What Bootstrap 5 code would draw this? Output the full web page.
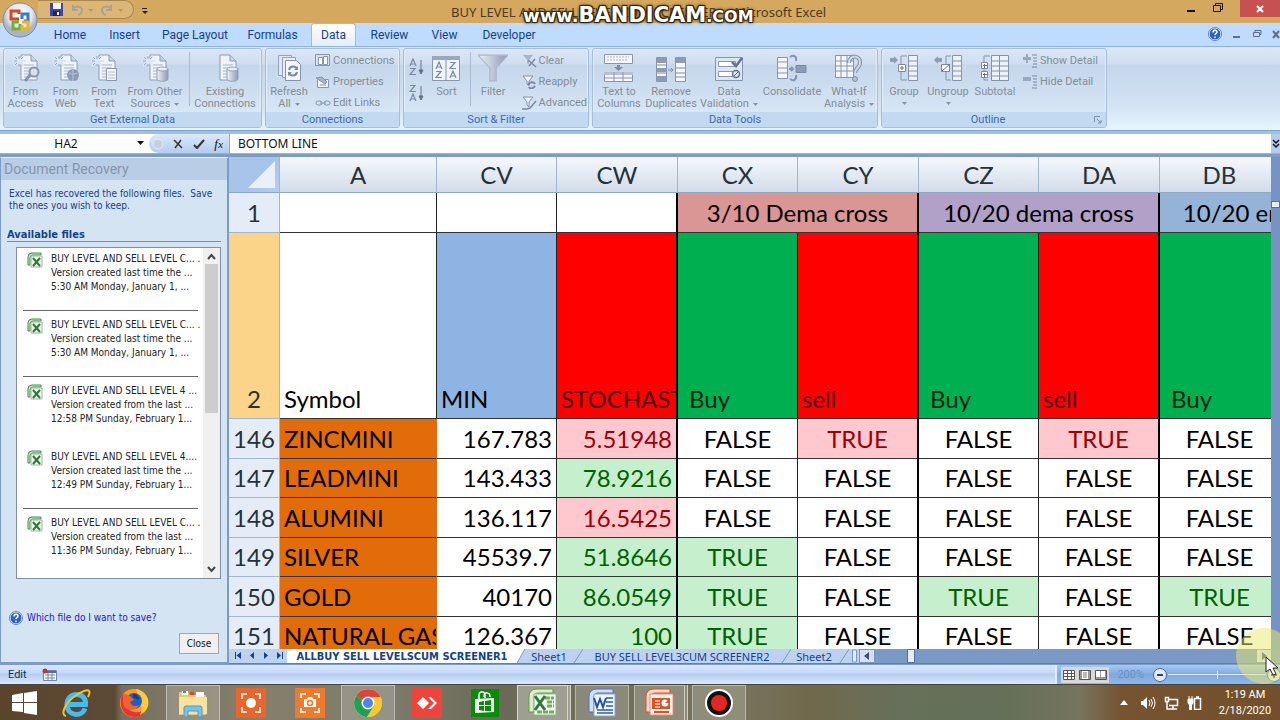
<!DOCTYPE html>
<html lang="en">
<head>
<meta charset="utf-8">
<meta name="viewport" content="width=device-width, initial-scale=1">
<title>BUY LEVEL AND SELL LEVEL CUM SCREENER - Microsoft Excel</title>
<link href="https://cdn.jsdelivr.net/npm/bootstrap@5.3.0/dist/css/bootstrap.min.css" rel="stylesheet">
<style>
:root{--ui:"Noto Sans","Open Sans",sans-serif;--rib:Roboto,"Noto Sans",sans-serif;--cal:Lato,sans-serif;--tahoma:"DejaVu Sans Condensed","DejaVu Sans",sans-serif}
body{font-family:var(--rib);font-size:11px;line-height:12px;color:#15428b;background:#bfdbff;overflow:hidden}
button{border:0;background:none;padding:0;color:inherit;font:inherit}
a{text-decoration:none}
svg{display:block;flex:none}
.titlebar{height:23px;background:#d5a85f}
.qat{width:96px;height:19px;margin-left:38px;border:1px solid #a98850;border-left:0;border-radius:0 10px 10px 0;background:#dcb676;padding-left:12px}
.wintitle{font:13px/24px var(--ui);color:#4c3c22;padding-left:303px}
.close-x{width:40px;height:17px;background:#c75050}
.orb{left:2px;top:2px;z-index:5}
.wmark{left:523px;top:3px;font-family:"DejaVu Sans",sans-serif;font-weight:bold;color:#fff;line-height:24px;text-shadow:1px 1px 1px #2b2110,-1px -1px 1px #2b2110,1px -1px 1px #2b2110,-1px 1px 1px #2b2110,0 0 4px #3b2c12;z-index:6}
.wmark .w1{font-size:18px}.wmark .w2{font-size:21px}.wmark .w3{font-size:16px}
.tabrow{height:23px;padding-left:43px;background:#bfdbff}
.tabrow .rtab{font-size:12px;line-height:24px;height:23px;text-align:center;color:#15428b}
.tabrow .rtab.on{background:linear-gradient(#fff,#e4eef9);border:1px solid #9dbbe0;border-bottom:0;border-radius:3px 3px 0 0;line-height:22px}
.ribbon{height:85px;padding:1px 3px 3px;gap:3px;border-top:1px solid #8db2e3;background:linear-gradient(#dce7f5 0,#cfdeef 17px,#c5d6eb 18px,#d4e4f4 60px,#e4f6ff 100%);border-bottom:1px solid #7fa4cc}
.rgroup{border:1px solid #a5bedb;border-radius:3px;box-shadow:inset 0 0 0 1px #e3edf8;height:80px}
.rgroup .gbody{flex:1;padding:1px 1px 0;color:#858d96;min-height:0}
.rgroup .gcap{height:15px;line-height:15px;text-align:center;background:#c1d9f1;color:#3e6aaa;border-radius:0 0 3px 3px}
.big{display:flex;flex-direction:column;align-items:center;text-align:center;white-space:nowrap;padding-top:3px!important}
.big svg{margin-bottom:3px}
.vsep{width:1px;height:54px;background:#a9bcd4;margin:2px 2px 0}
.small-b{display:flex;align-items:center;gap:2px;height:21px;white-space:nowrap}
.fbar{height:23px;border-top:3px solid #a4bfdd;border-bottom:1px solid #9ab3d2;background:#fff;color:#111}
.fbar input{border:0;outline:0;font:12px/19px var(--ui);color:#111;background:#fff;padding:0;min-width:0}
.fbar .namebox{width:132px;text-align:center}
.fxbox{width:81px;background:linear-gradient(#dbe9fa,#b3cdee);border-radius:10px 0 0 10px;border-right:1px solid #8eabd0;padding:0 6px 0 3px}
.work{flex:1;min-height:0;background:#d5e4f2;border-top:3px solid #7c9cc6}
.pane{width:229px;font-family:var(--tahoma);font-size:10px;border:1px solid #7c9cc6;border-right-width:2px;border-bottom-width:2px;background:#d5e4f2;border-top:1px solid #eef5fc}
.pane h2{font:14px/22px var(--rib);color:#8796ad;background:#b9cde6;margin:0;padding-left:3px}
.avail{font-weight:bold;font-size:11px;line-height:13px;border-bottom:1px solid #6d8fc0;margin:0 6px 5px}
.files{height:332px;margin:0 6px 0 15px;border:1px solid #7f90a6;background:#fff;color:#222}
.files ul{width:187px;overflow:hidden}
.files li{height:66px;padding:4px 0 0 10px;position:relative;line-height:14px;white-space:nowrap;gap:8px}
.files li.ruled::after{content:"";position:absolute;left:6px;right:5px;bottom:3px;height:1px;background:#666}
.fscroll{width:17px;background:#f0f0f0}
.fscroll .thumb{height:149px;background:#cdcdcd;width:13px}
.close-b{width:40px;height:21px;border:1px solid #a5a5a5;background:#f0f0f0;color:#111}
.gridwrap{flex:1;min-height:0;overflow:hidden;background:#fff}
.sheet{table-layout:fixed;width:1171px;border-collapse:separate;border-spacing:0;font:24px/30px var(--cal);color:#000}
.sheet th,.sheet td{border-right:1px solid #222;border-bottom:1px solid #333;padding:0 4px;overflow:hidden;white-space:nowrap;font-weight:400;vertical-align:middle}
.sheet thead th{height:36px;text-align:center;color:#263238;background:linear-gradient(#f6f9fd,#dfe7f1 60%,#d2dcea);border-right-color:#9eb6ce;border-bottom-color:#8ea9c8}
.sheet tbody th{background:#e4ecf7;color:#263238;text-align:center;padding:0;border-right-color:#9eb6ce;border-bottom-color:#9eb6ce}
.sheet .corner{background:linear-gradient(135deg,#a9c4e9 60%,#b7cdec)}
.sheet tbody tr:nth-child(odd)>*{height:40px}
.sheet tbody tr:nth-child(even)>*{height:39px}
.sheet tbody tr.r1>*{height:40px;text-align:center}
.sheet tbody tr.r2>*{height:186px;vertical-align:bottom;padding-bottom:4px}
.sheet tr.r2 th{background:#fbd389}
.sheet .thick{border-right:2px solid #000}
.sheet .sym{background:#e26b0a;border-right-color:#e26b0a}
.sheet .num{text-align:right}
.sheet .lg{text-align:center}
.sheet .dn{background:#ffc7ce;color:#9c0006}
.sheet .up{background:#c6efce;color:#006100}
.sheet .buy{background:#00b050;padding-left:11px;color:#021}
.sheet .sell{background:#f00;color:#400}
.vscroll{width:9px;background:#7594c4;padding-top:44px}
.vscroll i{display:block;height:7px;background:#e8effa;border:1px solid #516f9f}
.tabsbar{height:15px;background:#7a99c6;font-family:var(--ui);font-size:11px;line-height:15px;border-bottom:1px solid #5d80b4}
.tabsbar .strip{background:#bcd2f0;height:14px}
.tabsbar .stab{display:block;height:14px;white-space:nowrap;color:#15428b;text-align:center}
.stab.cur{background:#fff;font-family:var(--tahoma);font-weight:bold}
.status{height:20px;background:linear-gradient(#d9e7fb 0,#c3d8f8 8px,#b4cdf3 9px,#dbe8fc 100%);color:#1c2c4c;border-top:1px solid #7a9cc9}
.status .rt{background:linear-gradient(#a9c9f2,#7ea8e0 50%,#8fb7ea);border-left:2px solid #e3eefc;width:225px}
.views{background:#d8d8d8;width:53px;height:16px}
.zoomr{appearance:none;-webkit-appearance:none;height:8px;width:98px;margin:0;background:linear-gradient(#dceafc,#dceafc) center/100% 1px no-repeat,linear-gradient(#dceafc,#dceafc) center/1px 8px no-repeat}
.zoomr::-webkit-slider-thumb{-webkit-appearance:none;width:1px;height:8px;background:#dceafc}
.taskbar{height:36px;border-top:1px solid #47443c;background:linear-gradient(90deg,#5b442c 0,#5d4a35 115px,#77705f 122px,#84806c 260px,#7b7969 400px,#6b6a58 500px,#77745d 740px,#71694c 810px,#66705a 900px,#647059 1000px,#76745f 1080px,#775431 1120px,#73502b 100%)}
.apps{width:697px}
.apps button{width:54px;height:35px}
.apps .run{background:#ffffff30;border:1px solid #ffffff60;border-bottom:0}
.apps .act{background:#ffffff58;border:1px solid #ffffffa0;border-bottom:0}
.apps .many{border-right:4px double #ffffff90}
.clock{color:#fff;font-size:12px;line-height:16px;text-align:center;width:70px}
.pointer{right:-12px;bottom:36px;width:56px;height:56px;border-radius:50%;background:#e9e96a80;z-index:9;pointer-events:none}
.pointer svg{position:absolute;left:29px;top:28px}
</style>
</head>
<body class="vh-100 d-flex flex-column position-relative">
<svg width="0" height="0" class="position-absolute" aria-hidden="true">
<defs>
<linearGradient id="gb" x1="0" y1="0" x2="1" y2="0"><stop offset="0" stop-color="#eef2f8"/><stop offset="1" stop-color="#8c9ab3"/></linearGradient>
<radialGradient id="go" cx=".5" cy=".35"><stop offset="0" stop-color="#fff"/><stop offset=".7" stop-color="#e3e7ee"/><stop offset="1" stop-color="#aab4c4"/></radialGradient>
<symbol id="doc" viewBox="0 0 28 28"><path d="M9 1h10l6 6v19H9z" fill="#eff4fa" stroke="#8c9db8"/><path d="M19 1v6h6" fill="#c9d5e6" stroke="#8c9db8"/><path d="M12 11h10M12 14h10M12 17h10M12 20h7M12 23h7" stroke="#a7b4cb"/></symbol>
<symbol id="star" viewBox="0 0 28 28"><path d="M7 1v13M1 7h13M2 2l10 10M12 2L2 12" stroke="#dbe7f6" stroke-width="2"/><path d="M7 2v3M7 10v3M2 7h3M3 3l2 2M11 3l-2 2M3 11l2-2" stroke="#97a5bd"/></symbol>
<symbol id="cyl" viewBox="0 0 28 28"><path d="M16 15v10c0 3 11 3 11 0V15z" fill="url(#gb)" stroke="#93a1b8"/><ellipse cx="21.500" cy="15" rx="5.500" ry="2" fill="#e6ecf5" stroke="#93a1b8"/></symbol>
<symbol id="xl" viewBox="0 0 16 16"><path d="M1 5q0-4 4-4h9v2H6Q3 3 3 6v7H1z" fill="#cfe6cf" stroke="#3e8f4a"/><path d="M4 4h11v11H4z" fill="#eff7ef" stroke="#9db89f"/><path d="M6 6l7 8M13 6l-7 8" stroke="#2c7a36" stroke-width="2"/></symbol>
<symbol id="help" viewBox="0 0 14 14"><circle cx="7" cy="7" r="6" fill="#2d63c4" stroke="#fff"/><circle cx="7" cy="7" r="6.500" fill="none" stroke="#5b83be"/><path d="M5 5.500c0-3 4-3 4-.5 0 1.500-2 1.500-2 3M7 9.500v1.500" stroke="#fff" stroke-width="1.500" fill="none"/></symbol>
<symbol id="az" viewBox="0 0 16 18"><path d="M1 8l3-7 3 7M2 6h4M1 10.500h5l-5 6h6" fill="none" stroke="#7c89a3" stroke-width="1.200"/><path d="M12 2v13M10 12l2 4 2-4z" stroke="#64718c" fill="#64718c"/></symbol>
<symbol id="za" viewBox="0 0 16 18"><path d="M1 1.500h5l-5 6h6M1 17l3-7 3 7M2 15h4" fill="none" stroke="#7c89a3" stroke-width="1.200"/><path d="M12 2v13M10 12l2 4 2-4z" stroke="#64718c" fill="#64718c"/></symbol>
<symbol id="fun" viewBox="0 0 28 28"><path d="M0 2h28L17 14v12h-6V14z" fill="url(#gb)" stroke="#a9b5c9"/></symbol>
<symbol id="rows" viewBox="0 0 10 26"><path d="M.5.500h9v25h-9z" fill="#eef3fa" stroke="#8393ae"/><path d="M0 6h10M0 11h10M0 16h10M0 21h10" stroke="#8393ae"/></symbol>
<symbol id="dn" viewBox="0 0 5 3"><path d="M0 0h5L2.500 3z" fill="#8b939b"/></symbol>
</defs></svg>

<header class="titlebar d-flex align-items-start">
 <div class="qat d-flex align-items-center gap-2">
  <button aria-label="Save"><svg width="13" height="13"><path d="M0 0h13v13H0z" fill="#3a46a8"/><path d="M3 0h8v6H3z" fill="#f2f5ff"/><path d="M3 8h7v5H3z" fill="#22285f"/><path d="M7 9h2v3H7z" fill="#fff"/></svg></button>
  <button aria-label="Undo"><svg width="22" height="12"><path d="M2 1v5h5M2 6c2-5 9-4 9 0 0 2-1 4-4 5" fill="none" stroke="#a9a298" stroke-width="2"/><path d="M17 5h5l-2 3z" fill="#b4985f"/></svg></button>
  <button aria-label="Redo"><svg width="22" height="12"><path d="M10 1v5H5M10 6C8 1 1 2 1 6c0 2 1 4 4 5" fill="none" stroke="#a9a298" stroke-width="2"/><path d="M17 5h5l-2 3z" fill="#b4985f"/></svg></button>
 </div>
 <button aria-label="Customize toolbar" class="ms-2 mt-2"><svg width="6" height="6"><path d="M0 .5h5" stroke="#222"/><path d="M0 3h6L3 6z" fill="#222"/></svg></button>
 <div class="wintitle text-nowrap">BUY LEVEL AND SELL LEVEL CUM SCREENER&nbsp; - &nbsp;Microsoft Excel</div>
 <div class="ms-auto d-flex gap-3">
  <button aria-label="Minimize"><svg width="10" height="17"><path d="M1 11h8" stroke="#111" stroke-width="2"/></svg></button>
  <button aria-label="Restore"><svg width="12" height="17"><path d="M1.500 5.500h7v6h-7zM3.500 5V3.500h7v6H9" fill="none" stroke="#111"/></svg></button>
  <button aria-label="Close window" class="close-x d-flex align-items-center justify-content-center"><svg width="8" height="8"><path d="M1 1l6 6M7 1L1 7" stroke="#fff" stroke-width="2"/></svg></button>
 </div>
</header>
<button class="orb position-absolute" aria-label="Office Button"><svg width="36" height="36"><circle cx="18" cy="18" r="17" fill="url(#go)" stroke="#7e8ba2"/><g fill="none" stroke-width="3"><path d="M17 17H9V9h8v3" stroke="#d8481c"/><path d="M20 17v-5h6v7h-4" stroke="#2f7fc6"/><path d="M17 20h-6v7h7v-5" stroke="#78ab2e"/><path d="M20 20h6v7h-6v-4" stroke="#f0b323"/></g></svg></button>
<div class="wmark position-absolute text-nowrap"><span class="w1">www.</span><span class="w2">BANDICAM</span><span class="w3">.COM</span></div>

<nav class="tabrow d-flex align-items-start">
 <button class="rtab" style="width:54px">Home</button><button class="rtab" style="width:55px">Insert</button><button class="rtab" style="width:86px">Page Layout</button><button class="rtab" style="width:69px">Formulas</button>
 <button class="rtab on ms-1" style="width:45px">Data</button><button class="rtab" style="width:67px">Review</button><button class="rtab" style="width:43px">View</button><button class="rtab" style="width:86px">Developer</button>
 <div class="ms-auto d-flex align-items-center gap-2 pt-1">
  <button aria-label="Help"><svg width="14" height="14"><use href="#help"/></svg></button>
  <button aria-label="Minimize workbook"><svg width="12" height="12"><path d="M3 9h7" stroke="#5d6e8a" stroke-width="2"/></svg></button>
  <button aria-label="Restore workbook"><svg width="14" height="12"><path d="M3.500 4.500h6v4h-6zM5 4V2.500h6v4H10" fill="none" stroke="#5d6e8a"/></svg></button>
  <button aria-label="Close workbook"><svg width="8" height="10"><path d="M1 2l6 7M7 2L1 9" stroke="#5d6e8a" stroke-width="2"/></svg></button>
 </div>
</nav>

<section class="ribbon d-flex">
 <div class="rgroup d-flex flex-column" style="width:259px">
  <div class="gbody d-flex">
   <button class="big" style="width:41px"><svg width="28" height="30" viewBox="0 0 28 28"><use href="#doc"/><use href="#star"/><circle cx="22" cy="18" r="4.500" fill="#d9e1ed" stroke="#8795ae" stroke-width="2"/><path d="M18 21l-5 6" stroke="#8795ae" stroke-width="3"/></svg>From<br>Access</button>
   <button class="big" style="width:39px"><svg width="28" height="30" viewBox="0 0 28 28"><use href="#doc"/><use href="#star"/><circle cx="21" cy="21" r="6" fill="#8e9bb5"/><path d="M17 19q4 3 8 0M21 15v12" stroke="#b9c4d8" fill="none"/></svg>From<br>Web</button>
   <button class="big" style="width:38px"><svg width="28" height="30" viewBox="0 0 28 28"><use href="#doc"/><use href="#star"/><path d="M16.500 14.500h10v12h-10z" fill="#f6f8fc" stroke="#8795ae"/><path d="M18 18h7M18 21h7M18 24h7" stroke="#b0bbcf"/></svg>From<br>Text</button>
   <button class="big" style="width:64px"><svg width="28" height="30" viewBox="0 0 28 28"><use href="#doc"/><use href="#star"/><use href="#cyl"/></svg>From Other<br><span class="d-flex align-items-center gap-1">Sources <svg class="m-0" width="5" height="3"><use href="#dn"/></svg></span></button>
   <span class="vsep"></span>
   <button class="big" style="width:66px"><svg width="28" height="30" viewBox="0 0 28 28"><use href="#doc"/><use href="#cyl"/></svg>Existing<br>Connections</button>
  </div>
  <div class="gcap">Get External Data</div>
 </div>
 <div class="rgroup d-flex flex-column" style="width:135px">
  <div class="gbody d-flex">
   <button class="big" style="width:44px"><svg width="26" height="30" viewBox="0 0 26 28"><path d="M2.500 1.500h13v20h-13z" fill="#dfe7f2" stroke="#93a3bd"/><path d="M6.500 3.500h13v20h-13z" fill="#e7eef7" stroke="#93a3bd"/><path d="M9.500 6.500h11l4 4v16h-15z" fill="#f3f7fc" stroke="#8393ae"/><path d="M13 16c1-5 7-4 8-1M21 18c-1 5-7 4-8 1" fill="none" stroke="#7c8aa5" stroke-width="2"/><path d="M22 12v4h-4zM12 22v-4h4z" fill="#7c8aa5"/></svg>Refresh<br><span class="d-flex align-items-center gap-1">All <svg class="m-0" width="5" height="3"><use href="#dn"/></svg></span></button>
   <div class="ps-1">
    <button class="small-b"><svg width="16" height="14"><path d="M.5.500h14v11h-14z" fill="#d7e1ee" stroke="#8795ae"/><path d="M3.500 3.500h4v7h-4zM8.500 2.500h4v8h-4z" fill="#fff" stroke="#8795ae"/></svg>Connections</button>
    <button class="small-b"><svg width="16" height="14"><path d="M2.500 4.500h11v8h-11z" fill="#f3f6fb" stroke="#8795ae"/><path d="M1 3l6-1 5 5-2 2z" fill="#a8b4c8" stroke="#8795ae"/><path d="M5 10h6" stroke="#8795ae"/></svg>Properties</button>
    <button class="small-b"><svg width="16" height="14"><g fill="none" stroke="#8795ae"><rect x="1" y="5" width="6" height="4" rx="2"/><rect x="9" y="5" width="6" height="4" rx="2"/><path d="M5 7h6"/></g></svg>Edit Links</button>
   </div>
  </div>
  <div class="gcap">Connections</div>
 </div>
 <div class="rgroup d-flex flex-column" style="width:186px">
  <div class="gbody d-flex">
   <div class="d-flex flex-column gap-2 pt-2 ps-1"><button aria-label="Sort A to Z"><svg width="16" height="18"><use href="#az"/></svg></button><button aria-label="Sort Z to A"><svg width="16" height="18"><use href="#za"/></svg></button></div>
   <button class="big" style="width:44px"><svg width="28" height="30"><path d="M.5 3.500h27v24H.5z" fill="#eff3fa" stroke="#8795ae"/><path d="M0 3h28v4H0z" fill="#9aa8bf"/><path d="M14 7v20" stroke="#8795ae"/><path d="M4 16l3-7 3 7M5 14h4M4 18.500h5l-5 6h6M18 9.500h5l-5 6h6M18 25l3-7 3 7M19 23h4" fill="none" stroke="#7c89a3" stroke-width="1.200"/></svg>Sort</button>
   <span class="vsep"></span>
   <button class="big" style="width:42px"><svg width="30" height="30"><use href="#fun"/></svg>Filter</button>
   <div class="ps-2">
    <button class="small-b"><svg width="15" height="14"><path d="M1 1h10L7 6v5L5 9V6z" fill="#a8b4c8"/><path d="M6 6l8 7M13 5l-6 7" stroke="#7c89a3" stroke-width="1.500"/></svg>Clear</button>
    <button class="small-b"><svg width="15" height="14"><path d="M1 1h10L7 6v5L5 9V6z" fill="#f0f4fa" stroke="#8795ae"/><path d="M6 10c2-4 6-3 7-1M13 11c-2 3-5 3-6 1" fill="none" stroke="#7c89a3" stroke-width="2"/></svg>Reapply</button>
    <button class="small-b"><svg width="15" height="14"><path d="M1 1h10L7 6v5L5 9V6z" fill="#f0f4fa" stroke="#8795ae"/><path d="M14 5l-6 7-3 1M0 13h6" stroke="#7c89a3" stroke-width="1.500" fill="none"/></svg>Advanced</button>
   </div>
  </div>
  <div class="gcap">Sort &amp; Filter</div>
 </div>
 <div class="rgroup d-flex flex-column" style="width:286px">
  <div class="gbody d-flex">
   <button class="big" style="width:50px"><svg width="30" height="30"><path d="M.5 1.500h28v9H.5zM.5 19.500h28v9H.5z" fill="#f6f8fc" stroke="#8795ae"/><path d="M3 4h22M3 7h20" stroke="#a7b4cb" stroke-dasharray="2 1"/><path d="M0 19h29v3H0z" fill="#b6c2d4"/><path d="M10 19v9M19 19v9M0 25h29" stroke="#8795ae"/><path d="M13 12h3v2h3l-4.500 4L10 14h3z" fill="#7c89a3"/></svg>Text to<br>Columns</button>
   <button class="big" style="width:54px"><svg width="30" height="30"><path d="M.5 4.500h10v24H.5zM19.500 4.500h10v24h-10z" fill="#f6f8fc" stroke="#8795ae"/><path d="M1 5h9v5H1zM1 15h9v4H1zM1 23h9v5H1zM20 5h9v5h-9z" fill="#8e9bb5"/><path d="M1 12h9M1 20h9M20 15h9M20 20h9M20 24h9M12 17h5m-2-2l2 2-2 2" stroke="#7c89a3" fill="none"/></svg>Remove<br>Duplicates</button>
   <button class="big" style="width:62px"><svg width="30" height="30"><path d="M1.500 4.500h27v23h-27z" fill="#dde6f1" stroke="#8795ae"/><path d="M4.500 8.500h17v5h-17zM4.500 18.500h17v5h-17z" fill="#fff" stroke="#8795ae"/><path d="M18 9l4 4 6-8" stroke="#66738f" stroke-width="2.500" fill="none"/><circle cx="22" cy="21" r="3.500" fill="#dde6f1" stroke="#66738f" stroke-width="1.500"/><path d="M20 23l4-4" stroke="#66738f"/></svg>Data<br><span class="d-flex align-items-center gap-1">Validation <svg class="m-0" width="5" height="3"><use href="#dn"/></svg></span></button>
   <button class="big" style="width:64px"><svg width="30" height="30"><path d="M.5 4.500h10v21H.5z" fill="#f3f6fb" stroke="#8795ae"/><path d="M0 9h10M0 15h10M0 20h10" stroke="#8795ae"/><path d="M19 12.500h10v7H19z" fill="#8e9bb5" stroke="#7c89a3"/><path d="M12 16h4m-2-2l2 2-2 2M13 4c4-3 7 0 6 4M13 26c4 3 7 0 6-4" stroke="#8795ae" stroke-width="2" fill="none"/></svg>Consolidate</button>
   <button class="big" style="width:50px"><svg width="30" height="30"><path d="M1.500 2.500h18v22h-18z" fill="#f3f6fb" stroke="#8795ae"/><path d="M1 8h18M1 13h18M1 18h18M7 2v22M13 2v22" stroke="#8795ae"/><path d="M15 10c0-9 12-8 11 0 0 5-5 5-5 10" stroke="#8290aa" stroke-width="4" fill="none"/><path d="M15 10c0-9 12-8 11 0 0 5-5 5-5 10" stroke="#cfd9e7" stroke-width="2" fill="none"/><circle cx="21" cy="26" r="2.500" fill="#b4c0d3" stroke="#8290aa"/></svg>What-If<br><span class="d-flex align-items-center gap-1">Analysis <svg class="m-0" width="5" height="3"><use href="#dn"/></svg></span></button>
  </div>
  <div class="gcap">Data Tools</div>
 </div>
 <div class="rgroup d-flex flex-column" style="width:226px">
  <div class="gbody d-flex">
   <button class="big" style="width:42px"><svg width="30" height="30"><use href="#rows" x="19" y="2" width="10" height="26"/><path d="M18 3h-6v24h6" fill="none" stroke="#8795ae"/><path d="M9.500 11.500h7v7h-7z" fill="#fff" stroke="#7c89a3"/><path d="M11 15h4M13 13v4" stroke="#66738f"/><path d="M1 5h4V3l4 4-4 4V9H1z" fill="#8e9bb5"/></svg>Group<svg class="mt-1 mb-0" width="5" height="3"><use href="#dn"/></svg></button>
   <button class="big" style="width:46px"><svg width="30" height="30"><use href="#rows" x="19" y="2" width="10" height="26"/><path d="M18 3h-5v24h5" fill="none" stroke="#8795ae"/><path d="M8.500 11.500h8v7h-8z" fill="#fff" stroke="#7c89a3"/><path d="M9 18l8-7" stroke="#66738f"/><path d="M9 5H5V3L1 7l4 4V9h4z" fill="#8e9bb5"/></svg>Ungroup<svg class="mt-1 mb-0" width="5" height="3"><use href="#dn"/></svg></button>
   <button class="big" style="width:48px"><svg width="30" height="30"><use href="#rows" x="11" y="2" width="10" height="26"/><use href="#rows" x="19" y="2" width="10" height="26"/><path d="M10 3H4v24h4" fill="none" stroke="#8795ae"/><path d="M1.500 9.500h6v6h-6zM1.500 18.500h6v6h-6z" fill="#fff" stroke="#7c89a3"/><path d="M3 12.500h4M4.500 11v4M3 21.500h4M4.500 20v4" stroke="#66738f"/></svg>Subtotal</button>
   <div class="ps-1">
    <button class="small-b"><svg width="15" height="14"><path d="M0 3h3V0h2v3h3v3H5v3H3V6H0z" fill="#9aa8bf"/><path d="M9 1h5M10 4h4M10 7h4M10 10h4M9 13h5" stroke="#7c89a3"/></svg>Show Detail</button>
    <button class="small-b"><svg width="15" height="14"><path d="M0 2h8v4H0z" fill="#9aa8bf"/><path d="M9 1h5M10 4h4M10 7h4M10 10h4M9 13h5" stroke="#7c89a3"/></svg>Hide Detail</button>
   </div>
  </div>
  <div class="gcap d-flex align-items-center justify-content-center"><span class="ms-auto">Outline</span><button class="ms-auto me-1" aria-label="Outline settings"><svg width="8" height="8"><path d="M.5 6V.500H6M3 3l4 4M7 4v3H4" fill="none" stroke="#7d93b3"/></svg></button></div>
 </div>
</section>

<div class="fbar d-flex">
 <input class="namebox" aria-label="Name Box" value="HA2">
 <button aria-label="Names" class="px-1"><svg width="9" height="5"><path d="M1 0h7L4.500 4z" fill="#111"/></svg></button>
 <div class="fxbox d-flex align-items-center justify-content-between">
  <svg width="12" height="12"><circle cx="6" cy="6" r="5" fill="#c5d0df" stroke="#e8eef7"/></svg>
  <button aria-label="Cancel"><svg width="10" height="10"><path d="M1 1l8 8M8 1L2 9" stroke="#333" stroke-width="1.500"/></svg></button>
  <button aria-label="Enter"><svg width="12" height="10"><path d="M1 6l3 3 7-8" fill="none" stroke="#333" stroke-width="2"/></svg></button>
  <button aria-label="Insert Function" class="fst-italic" style="font-family:'Liberation Serif',serif;font-size:13px">f<small>x</small></button>
 </div>
 <input class="flex-grow-1 ps-1 ms-1" aria-label="Formula Bar" value="BOTTOM LINE">
 <button aria-label="Expand" style="width:9px;background:#b3cdee"><svg width="9" height="10"><path d="M2 1l3 3 3-3M2 5l3 3 3-3" fill="none" stroke="#111" stroke-width="1.500"/></svg></button>
</div>

<main class="work d-flex">
 <aside class="pane d-flex flex-column flex-shrink-0">
  <h2>Document Recovery</h2>
  <p class="text-nowrap px-1 ms-1 pt-2 mb-0">Excel has recovered the following files.&nbsp; Save<br>the ones you wish to keep.</p>
  <div class="avail mt-3">Available files</div>
  <div class="files d-flex">
   <ul class="list-unstyled mb-0">
    <li class="d-flex ruled"><svg width="16" height="16"><use href="#xl"/></svg><span>BUY LEVEL AND SELL LEVEL C... .<br>Version created last time the ...<br>5:30 AM Monday, January 1, ...</span></li>
    <li class="d-flex ruled"><svg width="16" height="16"><use href="#xl"/></svg><span>BUY LEVEL AND SELL LEVEL C... .<br>Version created last time the ...<br>5:30 AM Monday, January 1, ...</span></li>
    <li class="d-flex"><svg width="16" height="16"><use href="#xl"/></svg><span>BUY LEVEL AND SELL LEVEL 4 ...<br>Version created from the last ...<br>12:58 PM Sunday, February 1...</span></li>
    <li class="d-flex ruled"><svg width="16" height="16"><use href="#xl"/></svg><span>BUY LEVEL AND SELL LEVEL 4....<br>Version created last time the ...<br>12:49 PM Sunday, February 1...</span></li>
    <li class="d-flex"><svg width="16" height="16"><use href="#xl"/></svg><span>BUY LEVEL AND SELL LEVEL C... .<br>Version created from the last ...<br>11:36 PM Sunday, February 1...</span></li>
   </ul>
   <div class="fscroll d-flex flex-column align-items-center">
    <svg width="9" height="16"><path d="M1 11l3.500-4L8 11" fill="none" stroke="#444" stroke-width="2"/></svg>
    <div class="thumb"></div>
    <svg class="mt-auto" width="9" height="16"><path d="M1 5l3.500 4L8 5" fill="none" stroke="#444" stroke-width="2"/></svg>
   </div>
  </div>
  <a href="#" class="d-flex align-items-center gap-1 ms-2 mt-auto text-nowrap" style="color:#1a1ac8"><svg width="14" height="14"><use href="#help"/></svg>Which file do I want to save?</a>
  <button class="close-b ms-auto me-2 mt-2 mb-2">Close</button>
 </aside>
 <section class="flex-grow-1 d-flex flex-column" style="min-width:0">
  <div class="d-flex flex-grow-1" style="min-height:0">
   <div class="gridwrap">
    <table class="sheet">
     <colgroup><col style="width:51px"><col style="width:157px"><col style="width:120px"><col style="width:121px"><col style="width:120px"><col style="width:121px"><col style="width:120px"><col style="width:121px"><col style="width:120px"><col style="width:120px"></colgroup>
     <thead><tr><th class="corner p-0" aria-label="Select all"><svg class="ms-auto me-1" width="27" height="27"><path d="M27 0v27H0z" fill="#e9f0fa"/></svg></th><th>A</th><th>CV</th><th>CW</th><th>CX</th><th>CY</th><th>CZ</th><th>DA</th><th>DB</th></tr></thead>
     <tbody>
      <tr class="r1"><th>1</th><td></td><td></td><td class="thick"></td><td colspan="2" class="thick" style="background:#da9694">3/10 Dema cross</td><td colspan="2" class="thick" style="background:#b1a0c7">10/20 dema cross</td><td colspan="2" style="background:#95b3d7;padding-right:20px">10/20 ema cross</td></tr>
      <tr class="r2"><th>2</th><td>Symbol</td><td style="background:#8db4e2">MIN</td><td class="sell thick">STOCHAST</td><td class="buy">Buy</td><td class="sell thick">sell</td><td class="buy">Buy</td><td class="sell thick">sell</td><td class="buy">Buy</td></tr>
      <tr><th>146</th><td class="sym">ZINCMINI</td><td class="num">167.783</td><td class="num dn thick">5.51948</td><td class="lg">FALSE</td><td class="lg dn thick">TRUE</td><td class="lg">FALSE</td><td class="lg dn thick">TRUE</td><td class="lg">FALSE</td></tr>
      <tr><th>147</th><td class="sym">LEADMINI</td><td class="num">143.433</td><td class="num up thick">78.9216</td><td class="lg">FALSE</td><td class="lg thick">FALSE</td><td class="lg">FALSE</td><td class="lg thick">FALSE</td><td class="lg">FALSE</td></tr>
      <tr><th>148</th><td class="sym">ALUMINI</td><td class="num">136.117</td><td class="num dn thick">16.5425</td><td class="lg">FALSE</td><td class="lg thick">FALSE</td><td class="lg">FALSE</td><td class="lg thick">FALSE</td><td class="lg">FALSE</td></tr>
      <tr><th>149</th><td class="sym">SILVER</td><td class="num">45539.7</td><td class="num up thick">51.8646</td><td class="lg up">TRUE</td><td class="lg thick">FALSE</td><td class="lg">FALSE</td><td class="lg thick">FALSE</td><td class="lg">FALSE</td></tr>
      <tr><th>150</th><td class="sym">GOLD</td><td class="num">40170</td><td class="num up thick">86.0549</td><td class="lg up">TRUE</td><td class="lg thick">FALSE</td><td class="lg up">TRUE</td><td class="lg thick">FALSE</td><td class="lg up">TRUE</td></tr>
      <tr><th>151</th><td class="sym">NATURAL GAS</td><td class="num">126.367</td><td class="num up thick">100</td><td class="lg up">TRUE</td><td class="lg thick">FALSE</td><td class="lg">FALSE</td><td class="lg thick">FALSE</td><td class="lg">FALSE</td></tr>
     </tbody>
    </table>
   </div>
   <div class="vscroll flex-shrink-0"><i></i></div>
  </div>
  <div class="tabsbar d-flex flex-shrink-0">
   <div class="strip d-flex flex-shrink-0">
    <svg width="58" height="14"><g fill="#15428b"><path d="M6 3h1v7H6zM12 3v7L7.500 6.500zM25 3v7l-4-3.500zM35 3v7l4-3.500zM48 3v7l4-3.500zM53 3h1v7h-1z"/></g></svg>
    <a href="#" class="stab cur" style="width:230px">ALLBUY SELL LEVELSCUM SCREENER1</a>
    <svg width="8" height="14"><path d="M0 0h8L0 14z" fill="#fff"/><path d="M8 0L0 14" stroke="#7a99c6"/></svg>
    <a href="#" class="stab" style="width:48px">Sheet1</a>
    <svg width="10" height="14"><path d="M10 0L1 14" stroke="#7a99c6"/></svg>
    <a href="#" class="stab" style="width:198px">BUY SELL LEVEL3CUM SCREENER2</a>
    <svg width="10" height="14"><path d="M10 0L1 14" stroke="#7a99c6"/></svg>
    <a href="#" class="stab" style="width:46px">Sheet2</a>
    <svg width="22" height="14"><path d="M12 0L3 14" stroke="#7a99c6"/><path d="M15.500 1v12h4V1z" fill="#e8effa" stroke="#7a99c6"/></svg>
   </div>
   <button aria-label="Scroll left"><svg width="16" height="14"><path d="M.5.500h15v13H.5z" fill="#d4e1f3" stroke="#7e94b5"/><path d="M10 3v8L5 7z" fill="#33507f"/></svg></button>
   <svg width="40" height="14"><path d="M32.500.500h7v13h-7z" fill="#e6edf7" stroke="#516f9f"/></svg>
   <button class="ms-auto me-2" aria-label="Scroll right"><svg width="16" height="14"><path d="M.5.500h15v13H.5z" fill="#d4e1f3" stroke="#7e94b5"/><path d="M6 3v8l5-4z" fill="#33507f"/></svg></button>
  </div>
 </section>
</main>

<footer class="status d-flex align-items-center flex-shrink-0">
 <span class="ps-2" style="width:34px">Edit</span>
 <button class="ms-2" aria-label="Record macro"><svg width="16" height="14"><path d="M1.500 2.500h13v10h-13z" fill="#fff" stroke="#6d86b5"/><path d="M2 3h12v2H2z" fill="#4d6fb0"/><path d="M3 7h10M3 10h10M6 5v7M10 5v7" stroke="#6d86b5"/><circle cx="3" cy="3" r="2.500" fill="#b5382c"/></svg></button>
 <div class="rt ms-auto h-100 d-flex align-items-center ps-1">
  <div class="views d-flex align-items-center justify-content-around">
   <button aria-label="Normal"><svg width="12" height="10"><path d="M.5.500h11v9H.5zM0 3.500h12M0 6.500h12M4.500 0v10M8.500 0v10" fill="#fff" stroke="#555"/></svg></button>
   <button aria-label="Page Layout view"><svg width="12" height="10"><path d="M.5.500h11v9H.5z" fill="#999" stroke="#555"/><path d="M3 1h6v8H3z" fill="#fff"/><path d="M4 3h4M4 5h4M4 7h4" stroke="#777"/></svg></button>
   <button aria-label="Page Break view"><svg width="12" height="10"><path d="M.5.500h11v9H.5z" fill="#999" stroke="#555"/><path d="M1 1h4v6H1zM6 1h4v6H6z" fill="#fff"/></svg></button>
  </div>
  <span class="ms-2 text-center" style="color:#6c8fbd;width:27px">200%</span>
  <button class="ms-2" aria-label="Zoom out"><svg width="16" height="16"><circle cx="8" cy="8" r="6.500" fill="#dfeafa" stroke="#456ba4"/><path d="M5 8h6" stroke="#345" stroke-width="2"/></svg></button>
  <input type="range" class="zoomr" aria-label="Zoom" value="50">
  <button aria-label="Zoom in"><svg width="14" height="16"><circle cx="8" cy="8" r="6.500" fill="#dfeafa" stroke="#456ba4"/><path d="M5 8h6M8 5v6" stroke="#345" stroke-width="2"/></svg></button>
 </div>
</footer>

<div class="taskbar d-flex align-items-center flex-shrink-0">
 <button class="ps-2 ms-1 pe-2" style="width:45px" aria-label="Start"><svg width="25" height="24"><path d="M0 4l11-2v9H0zM12 2l13-2v11H12zM0 12h11v9L0 20zM12 12h13v12l-13-2z" fill="#fff"/></svg></button>
 <div class="apps d-flex justify-content-between flex-shrink-0">
  <button class="d-flex align-items-center justify-content-center" aria-label="Internet Explorer"><svg width="30" height="30"><path d="M8 16.500h16.500C26 3 6 3 6 16.500c0 12 15 13 18 4" fill="none" stroke="#45bcee" stroke-width="5"/><path d="M5 28C-1 27 4 15 14 8c7-5 13-7 14-5 1 1 0 4-1 6" fill="none" stroke="#f3c22f" stroke-width="2"/></svg></button>
  <button class="d-flex align-items-center justify-content-center" aria-label="Firefox"><svg width="30" height="30"><circle cx="15" cy="15" r="14" fill="#ff9a1f"/><path d="M4 5c-6 11 0 24 11 24 7 0 11-4 13-9-4 4-8 5-13 4-5-1-8-5-6-10z" fill="#e8313b"/><path d="M17 1c9 2 14 9 12 17-1 4-4 7-8 9 3-7 1-12-1-15z" fill="#ffc93a"/><circle cx="15" cy="13" r="8" fill="#1f5fc4"/><path d="M4 5c2 2 5 1 7 3l4 4-4 2c1 4 6 5 9 3-3 8-15 6-16-2z" fill="#f2622a"/><path d="M14 6c3 0 6 2 6 6-2-2-4-1-6-3z" fill="#173a84"/></svg></button>
  <button class="run d-flex align-items-center justify-content-center" aria-label="File Explorer"><svg width="30" height="30"><path d="M1 4h9l2 3h16v20H1z" fill="#e9c866"/><path d="M4 3h6v4H4zM18 4h8v5h-8z" fill="#fff"/><path d="M5 3h3v2H5z" fill="#34a853"/><path d="M12 4h4v3h-4z" fill="#d9482e"/><path d="M1 9h28v17H1z" fill="#f8e29c"/><path d="M6 29V20q0-2 2-2h14q2 0 2 2v9h-4v-6H10v6z" fill="#78c1ea" stroke="#4a9ccc"/></svg></button>
  <button class="d-flex align-items-center justify-content-center" aria-label="Bandicam"><svg width="30" height="30"><path d="M0 0h30v30H0z" fill="#e8652b"/><circle cx="15" cy="15" r="5" fill="#fff"/><path d="M6 11V6h5M19 6h5v5M24 19v5h-5M11 24H6v-5" fill="none" stroke="#ffd9c4" stroke-width="2"/></svg></button>
  <button class="d-flex align-items-center justify-content-center" aria-label="Screen capture"><svg width="30" height="30"><path d="M0 0h30v30H0z" fill="#ee7a2d"/><path d="M9 11h3l1-2h4l1 2h3v8H9z" fill="#fff"/><circle cx="15" cy="15" r="2.500" fill="none" stroke="#ee7a2d" stroke-width="1.500"/><path d="M6 10V6h5M19 6h5v4M24 20v4h-5M11 24H6v-4" fill="none" stroke="#ffe6d2" stroke-width="2"/></svg></button>
  <button class="run d-flex align-items-center justify-content-center" aria-label="Chrome"><svg width="30" height="30"><circle cx="15" cy="15" r="14" fill="#f9c82f"/><path d="M15 15L3 8a14 14 0 0 1 24.500 1z" fill="#dc4437"/><path d="M15 15L3 8a14 14 0 0 0 11 21l7-11z" fill="#1da05a"/><path d="M27.500 9H15l6 9-7 11A14 14 0 0 0 27.500 9z" fill="#f9c82f"/><circle cx="15" cy="15" r="6.500" fill="#fff"/><circle cx="15" cy="15" r="5" fill="#4a86ee"/></svg></button>
  <button class="d-flex align-items-center justify-content-center" aria-label="AnyDesk"><svg width="30" height="30"><rect width="30" height="30" rx="2" fill="#ef443b"/><path d="M11 9l6 6-6 6-6-6zM16 9h3l6 6-6 6h-3l6-6z" fill="#fff"/></svg></button>
  <button class="d-flex align-items-center justify-content-center" aria-label="Store"><svg width="28" height="28"><path d="M0 0h28v28H0z" fill="#0c8a0c"/><path d="M4 10l19-1v14l-19 1z" fill="#fff"/><path d="M8 10V6c0-4 6-4 6 0v3M13 8c0-6 6-5 6 0" fill="none" stroke="#fff" stroke-width="1.500"/><path d="M8 13l5-1v4H8zM14 12l6-1v5h-6zM8 17h5v5l-5-1zM14 17h6v5l-6 0z" fill="#0c8a0c"/></svg></button>
  <button class="act many d-flex align-items-center justify-content-center" aria-label="Excel"><svg width="30" height="30"><path d="M2 24V9q0-8 8-8h16v4H11q-4 0-4 5v14z" fill="#d8efc8" stroke="#5ba348"/><path d="M7 6h22v21H7z" fill="#f5faf2" stroke="#8fb886"/><path d="M18 10h9M20 14h7M20 18h7M10 24h17" stroke="#6fae5c" stroke-width="3" stroke-dasharray="5 1"/><path d="M8 8l10 14M18 8L8 22" stroke="#2c7a36" stroke-width="3"/></svg></button>
  <button class="run d-flex align-items-center justify-content-center" aria-label="Word"><svg width="30" height="30"><path d="M2 24V9q0-8 8-8h16v4H11q-4 0-4 5v14z" fill="#cfdff7" stroke="#4a74bd"/><path d="M7 6h21v22H7z" fill="#f4f8ff" stroke="#88a4d4"/><path d="M19 10h7M19 14h7M19 18h7M10 22h16M10 25h16" stroke="#5b82c8" stroke-width="2"/><path d="M7 10l3 9 3-8 3 8 3-9" fill="none" stroke="#25509f" stroke-width="2"/></svg></button>
  <button class="run many d-flex align-items-center justify-content-center" aria-label="PowerPoint"><svg width="30" height="30"><path d="M2 24V9q0-8 8-8h16v4H11q-4 0-4 5v14z" fill="#fbd9c8" stroke="#d1562c"/><path d="M6 6h23v21H6z" fill="#fff6f0" stroke="#dd8a68"/><path d="M8 10h18v11H8z" fill="#d9532a"/><path d="M11 13h5M11 16h5M11 19h5" stroke="#fff"/><circle cx="21" cy="15" r="3.500" fill="#fff"/><path d="M21 15h4v-4z" fill="#d9532a"/><path d="M10 24h15" stroke="#d9532a" stroke-width="2"/></svg></button>
  <button class="run d-flex align-items-center justify-content-center" aria-label="Recorder"><svg width="30" height="30"><circle cx="15" cy="15" r="13" fill="#111" stroke="#fff" stroke-width="2"/><circle cx="15" cy="15" r="8" fill="#e8251f"/></svg></button>
 </div>
 <div class="ms-auto d-flex align-items-center gap-2">
  <button aria-label="Show hidden icons"><svg width="8" height="5"><path d="M4 0l4 5H0z" fill="#fff"/></svg></button>
  <button class="ms-1" aria-label="Volume"><svg width="16" height="14"><path d="M1 5h2l4-4v12L3 9H1z" fill="#fff"/><path d="M9 4q2 3 0 6M11 3q3 4 0 8M13 1q4 6 0 12" stroke="#fff" fill="none"/></svg></button>
  <button aria-label="Network"><svg width="15" height="14"><path d="M5 3.500h8.500v6H5M9 10v3M5 13h8M1.500 1.500h3v4h-3zM3 6v7h3" fill="none" stroke="#fff" stroke-width="1.500"/></svg></button>
  <button class="me-1" aria-label="Battery"><svg width="15" height="14"><path d="M7.500 2.500h6v11h-6zM9 1h3" fill="none" stroke="#fff" stroke-width="1.500"/><path d="M1 3h5v4L4.500 9v5h-2V9L1 7zM2 0v3M5 0v3" fill="#fff" stroke="#fff"/></svg></button>
  <div class="clock text-nowrap" style="width:62px;margin-right:4px;font-size:11px">1:19 AM<br>2/18/2020</div>
 </div>
</div>
<div class="pointer position-absolute"><svg width="15" height="20"><path d="M1 1v15l4-3 3 6 3-1-3-6h5z" fill="#fff" stroke="#222"/></svg></div>
<script src="https://cdn.jsdelivr.net/npm/bootstrap@5.3.0/dist/js/bootstrap.bundle.min.js"></script>
</body>
</html>
